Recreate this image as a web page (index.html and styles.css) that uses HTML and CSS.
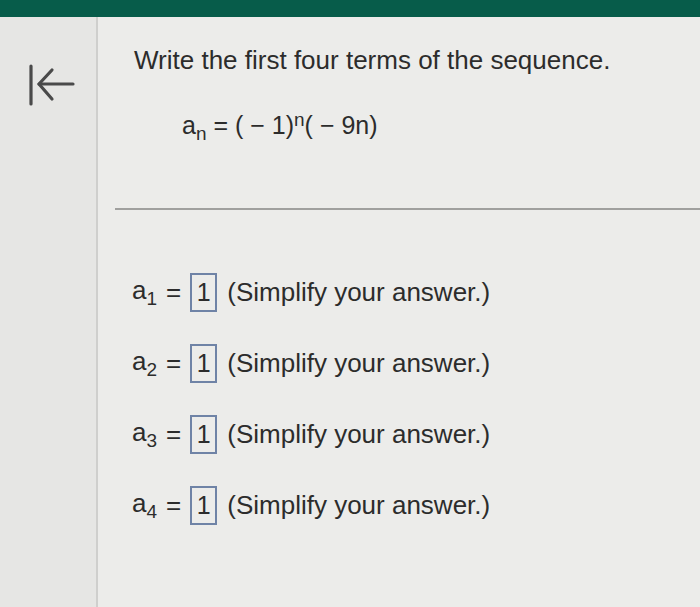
FILE: index.html
```html
<!DOCTYPE html>
<html>
<head>
<meta charset="utf-8">
<link rel="stylesheet" href="styles.css">
</head>
<body>
<div class="topbar"></div>
<div class="main">
  <aside class="side">
    <svg class="back" width="48" height="44" viewBox="0 0 48 44" fill="none" stroke="#4a4a4a" stroke-width="3.2" stroke-linecap="round" stroke-linejoin="round">
      <line x1="3" y1="3" x2="3" y2="41"/>
      <line x1="11" y1="21" x2="45" y2="21"/>
      <polyline points="24,7 11,21 24,36"/>
    </svg>
  </aside>
  <section class="content">
    <p class="prompt">Write the first four terms of the sequence.</p>
    <div class="formula">a<sub>n</sub> = ( − 1)<sup>n</sup>( − 9n)</div>
    <hr class="rule">
    <div class="answers">
      <div class="row"><span class="lhs">a<sub>1</sub></span><span class="eq">=</span><span class="box">1</span><span class="hint">(Simplify your answer.)</span></div>
      <div class="row"><span class="lhs">a<sub>2</sub></span><span class="eq">=</span><span class="box">1</span><span class="hint">(Simplify your answer.)</span></div>
      <div class="row"><span class="lhs">a<sub>3</sub></span><span class="eq">=</span><span class="box">1</span><span class="hint">(Simplify your answer.)</span></div>
      <div class="row"><span class="lhs">a<sub>4</sub></span><span class="eq">=</span><span class="box">1</span><span class="hint">(Simplify your answer.)</span></div>
    </div>
  </section>
</div>
</body>
</html>
```

FILE: styles.css
```css
html, body {
  margin: 0;
  padding: 0;
  height: 100%;
}
body {
  font-family: "Liberation Sans", Arial, sans-serif;
  color: #2c2c2c;
  background: #ebebe9;
  overflow: hidden;
}
.topbar {
  height: 17px;
  background: #075c4a;
}
.main {
  display: flex;
  height: 590px;
}
.side {
  width: 98px;
  flex: none;
  border-right: 2px solid #cfcfcd;
  background: #e6e6e4;
  padding-top: 46px;
  box-sizing: border-box;
}
.back {
  display: block;
  margin-left: 28px;
}
.content {
  flex: 1;
  background: #ececea;
}
.prompt {
  margin: 28px 0 0 36px;
  font-size: 26px;
  line-height: 30px;
}
.formula {
  margin: 30px 0 0 84px;
  font-size: 25px;
  line-height: 30px;
}
.formula sub {
  font-size: 19px;
  vertical-align: -6px;
}
.formula sup {
  font-size: 19px;
  vertical-align: 8px;
}
.rule {
  margin: 59px 0 0 17px;
  border: 0;
  border-top: 2px solid #a0a09e;
}
.answers {
  display: flex;
  flex-direction: column;
  gap: 32px;
  margin: 63px 0 0 34px;
}
.row {
  display: flex;
  align-items: center;
  font-size: 26px;
  height: 39px;
}
.lhs sub {
  font-size: 19px;
  vertical-align: -6px;
}
.eq {
  margin: 0 9px 0 9px;
}
.box {
  width: 23px;
  height: 35px;
  border: 2px solid #6f83a6;
  display: flex;
  align-items: center;
  justify-content: center;
  font-size: 25px;
  margin-right: 10px;
}
.hint {
  white-space: nowrap;
}
```
